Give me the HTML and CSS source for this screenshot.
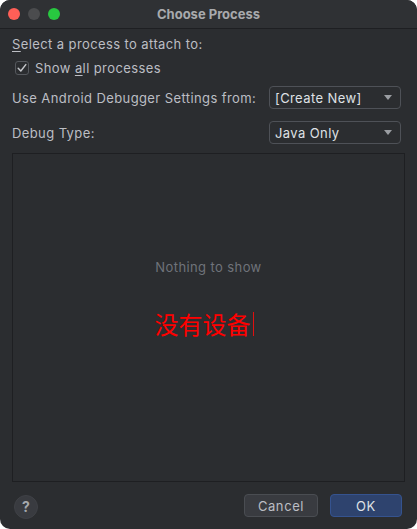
FILE: index.html
```html
<!DOCTYPE html>
<html>
<head>
<meta charset="utf-8">
<link rel="stylesheet" href="styles.css">
</head>
<body>
<div class="window">
  <div class="titlebar">
    <div class="lights">
      <span class="light red"></span>
      <span class="light gray"></span>
      <span class="light green"></span>
    </div>
    <div class="title">Choose Process</div>
  </div>
  <div class="content">
    <div class="line first"><u>S</u>elect a process to attach to:</div>
    <label class="line check-row">
      <span class="checkbox">
        <svg width="12" height="12" viewBox="0 0 12 12"><path d="M2.2 6.3 L4.8 9 L9.8 2.6" fill="none" stroke="#c4c6ca" stroke-width="1.5" stroke-linecap="round" stroke-linejoin="round"/></svg>
      </span>
      <span>Show <u>a</u>ll processes</span>
    </label>
    <div class="form-row row-a">
      <span class="label">Use Android Debugger Settings from:</span>
      <div class="combo"><span>[Create New]</span><span class="arrow"></span></div>
    </div>
    <div class="form-row row-b">
      <span class="label">Debug Type:</span>
      <div class="combo"><span>Java Only</span><span class="arrow"></span></div>
    </div>
    <div class="panel">
      <div class="empty">Nothing to show</div>
      <div class="nodev"><span>没有设备</span><span class="caret"></span></div>
    </div>
    <div class="footer">
      <div class="help">?</div>
      <div class="buttons">
        <div class="btn cancel">Cancel</div>
        <div class="btn ok">OK</div>
      </div>
    </div>
  </div>
</div>
</body>
</html>
```
FILE: styles.css
```css
html, body {
  margin: 0;
  padding: 0;
  background: #ffffff;
}
.window {
  width: 417px;
  height: 529px;
  background: #2b2d30;
  border-radius: 10px;
  overflow: hidden;
  display: flex;
  flex-direction: column;
  font-family: Inter, "Noto Sans", sans-serif;
  font-size: 13px;
  letter-spacing: 0.4px;
  color: #bcbec4;
}
.titlebar {
  height: 28px;
  border-bottom: 1px solid #1e1f22;
  background: #2f3134;
  display: flex;
  align-items: center;
  justify-content: center;
  position: relative;
}
.lights {
  position: absolute;
  left: 8px;
  top: 8px;
  display: flex;
  gap: 8px;
}
.light {
  width: 12px;
  height: 12px;
  border-radius: 50%;
  display: block;
}
.red { background: #ff5f57; }
.gray { background: #4b4c4e; }
.green { background: #28c840; }
.title {
  font-weight: 700;
  font-size: 13px;
  letter-spacing: 0;
  color: #a8aaad;
}
.content {
  flex: 1;
  display: flex;
  flex-direction: column;
  padding: 0 12px;
}
.line {
  height: 16px;
  line-height: 16px;
  white-space: nowrap;
}
.first {
  margin-top: 7px;
}
u {
  text-decoration-thickness: 1px;
  text-underline-offset: 2px;
}
.check-row {
  margin-top: 8px;
  display: flex;
  align-items: center;
  gap: 6px;
  padding-left: 3px;
}
.checkbox {
  width: 12px;
  height: 12px;
  border: 1px solid #55585d;
  border-radius: 3px;
  display: flex;
  align-items: center;
  justify-content: center;
  background: #2b2d30;
}
.form-row {
  display: grid;
  grid-template-columns: 257px 132px;
  align-items: center;
  height: 23px;
}
.row-a { margin-top: 10px; }
.row-b { margin-top: 12px; }
.label {
  white-space: nowrap;
}
.combo {
  height: 21px;
  border: 1px solid #4e5157;
  border-radius: 4px;
  display: flex;
  align-items: center;
  justify-content: space-between;
  padding: 0 8px 0 5px;
  color: #dfe1e5;
}
.arrow {
  width: 0;
  height: 0;
  border-left: 4.5px solid transparent;
  border-right: 4.5px solid transparent;
  border-top: 5px solid #9a9da2;
}
.panel {
  margin-top: 9px;
  height: 327px;
  border: 1px solid #1e1f22;
  display: flex;
  flex-direction: column;
  align-items: center;
}
.empty {
  margin-top: 105px;
  height: 16px;
  line-height: 16px;
  color: #6f737a;
}
.nodev {
  margin-top: 36px;
  height: 25px;
  display: flex;
  align-items: center;
  gap: 2px;
  color: #ff0000;
  font-family: "Noto Sans CJK SC", sans-serif;
  font-size: 24px;
  font-weight: 400;
  letter-spacing: 0;
  line-height: 25px;
  margin-right: 9px;
}
.caret {
  width: 1px;
  height: 24px;
  background: #e01010;
}
.footer {
  margin-top: 11px;
  display: flex;
  align-items: center;
  justify-content: space-between;
  height: 25px;
}
.help {
  width: 22px;
  height: 22px;
  border-radius: 50%;
  background: #393b40;
  border: 1px solid #3f4146;
  color: #a6a9ad;
  font-weight: 700;
  font-size: 14px;
  letter-spacing: 0;
  display: flex;
  align-items: center;
  justify-content: center;
  margin-left: 2px;
  margin-top: 2px;
}
.buttons {
  display: flex;
  gap: 12px;
  margin-right: 3px;
}
.btn {
  height: 21px;
  border-radius: 4px;
  display: flex;
  align-items: center;
  justify-content: center;
  letter-spacing: 0.6px;
}
.cancel {
  width: 72px;
  background: #393b40;
  border: 1px solid #4a4d52;
  color: #bcbec4;
}
.ok {
  width: 70px;
  background: #2e436e;
  border: 1px solid #35538f;
  color: #dfe1e5;
}
```
